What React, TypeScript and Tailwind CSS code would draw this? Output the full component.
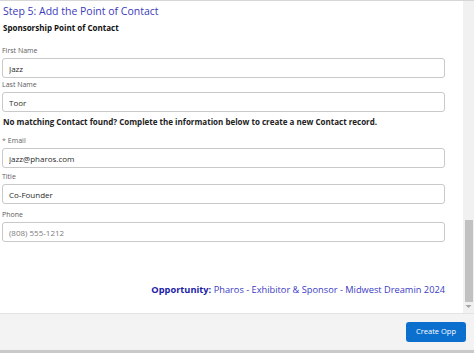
import React from "react";

type Field = {
  label: string;
  value?: string;
  placeholder?: string;
  required?: boolean;
  gap: string;
};

const fields1: Field[] = [
  { label: "First Name", value: "Jazz", gap: "mt-[10px]" },
  { label: "Last Name", value: "Toor", gap: "mt-[1px]" },
];

const fields2: Field[] = [
  { label: "Email", value: "jazz@pharos.com", required: true, gap: "mt-[6px]" },
  { label: "Title", value: "Co-Founder", gap: "mt-[3px]" },
  { label: "Phone", placeholder: "(808) 555-1212", gap: "mt-[5px]" },
];

function FormField({ field }: { field: Field }) {
  return (
    <div className={field.gap}>
      <label className="block h-[12px] text-[7px] leading-[12px] text-[#5c5c5c]">
        {field.required && <span className="mr-[2px] text-[#7a7a7a]">*</span>}
        {field.label}
      </label>
      <input
        readOnly
        defaultValue={field.value}
        placeholder={field.placeholder}
        className="mt-[1px] block h-[20px] w-full rounded-[3px] border border-[#c9c9c9] bg-white px-[6px] text-[8px] text-[#2b2b2b] outline-none placeholder:text-[#7d7d7d]"
      />
    </div>
  );
}

export default function App() {
  return (
    <div
      className="flex h-[353px] w-[474px] flex-col overflow-hidden bg-white"
      style={{ fontFamily: '"Open Sans", "Noto Sans", sans-serif' }}
    >
      {/* Scrollable body */}
      <div className="flex h-[313px] border-t border-[#d6d6d6]">
        <div className="flex-1 pl-[2px] pr-[18px]">
          <h2 className="h-[20px] pl-[1px] text-[10.5px] leading-[20px] text-[#3b3bbd]">
            Step 5: Add the Point of Contact
          </h2>
          <p className="h-[14px] pl-[1px] text-[8px] font-bold leading-[14px] text-[#111]">
            Sponsorship Point of Contact
          </p>

          {fields1.map((f) => (
            <FormField key={f.label} field={f} />
          ))}

          <p className="mt-[3px] h-[14px] pl-[1px] text-[8px] font-bold leading-[14px] text-[#222]">
            No matching Contact found? Complete the information below to create a new Contact record.
          </p>

          {fields2.map((f) => (
            <FormField key={f.label} field={f} />
          ))}

          <p className="mt-[41px] h-[14px] text-right text-[9.25px] leading-[14px] text-[#3b3bc4]">
            <span className="font-bold text-[#1c1ca6]">Opportunity:</span> Pharos - Exhibitor &amp; Sponsor - Midwest Dreamin 2024
          </p>
        </div>

        {/* Scrollbar */}
        <div className="flex w-[11px] flex-col items-center bg-[#f1f1f1]">
          <div className="mt-[219px] h-[82px] w-[8px] bg-[#c1c1c1]" />
          <svg width="7" height="5" viewBox="0 0 7 5" className="mt-[2px]">
            <path d="M0.5 1 L6.5 1 L3.5 4 Z" fill="#a3a3a3" />
          </svg>
        </div>
      </div>

      {/* Footer */}
      <div className="flex h-[37px] items-center justify-end border-t border-[#e3e3e3] bg-[#f3f3f3] pr-[8px]">
        <button className="h-[20px] w-[60px] rounded-[3px] bg-[#0b6fce] text-[7.5px] text-white">
          Create Opp
        </button>
      </div>
      <div className="flex-1 bg-[#c9c9c9]" />
    </div>
  );
}
